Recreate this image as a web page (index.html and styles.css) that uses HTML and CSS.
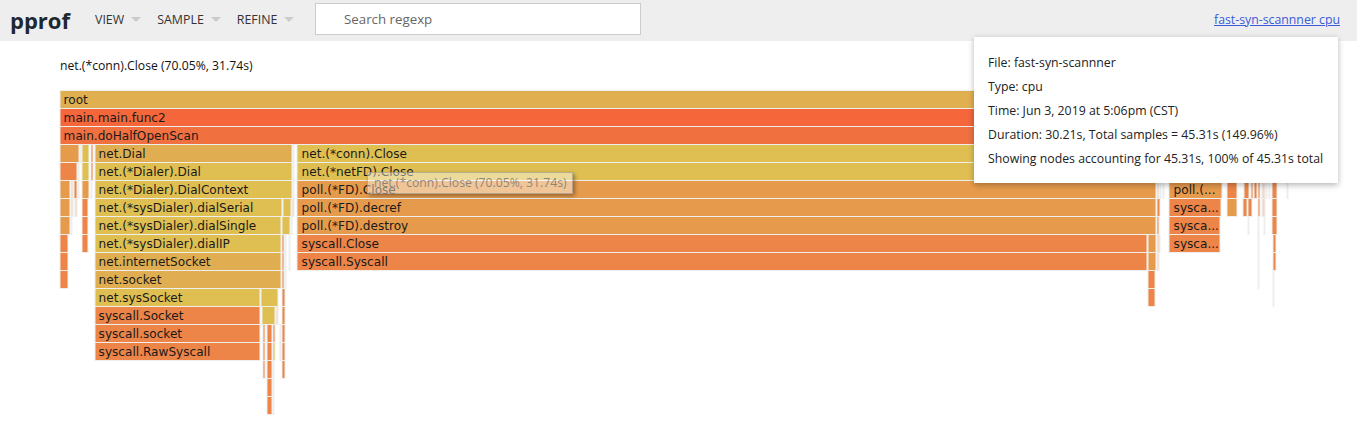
FILE: index.html
```html
<!DOCTYPE html>
<html lang="en">
<head>
<meta charset="utf-8">
<title>pprof</title>
<link rel="stylesheet" href="styles.css">
</head>
<body>
<header class="bar">
  <a class="logo">pprof</a>
  <nav class="menus">
    <span class="menu">VIEW<i class="caret"></i></span>
    <span class="menu">SAMPLE<i class="caret"></i></span>
    <span class="menu">REFINE<i class="caret"></i></span>
  </nav>
  <div class="search"><span class="placeholder">Search regexp</span></div>
  <a class="title-link">fast-syn-scannner cpu</a>
</header>
<aside class="details">
  <div>File: fast-syn-scannner</div>
  <div>Type: cpu</div>
  <div>Time: Jun 3, 2019 at 5:06pm (CST)</div>
  <div>Duration: 30.21s, Total samples = 45.31s (149.96%)</div>
  <div>Showing nodes accounting for 45.31s, 100% of 45.31s total</div>
</aside>
<p class="current">net.(*conn).Close (70.05%, 31.74s)</p>
<main class="graph">
<svg class="flame" width="1357" height="340" viewBox="0 0 1357 340">
<g transform="translate(0 .5)">
<rect class="root" x="60" y="0" width="1230" height="18"/>
<rect class="hot" x="60" y="18" width="1230" height="18"/>
<rect class="warm" x="60" y="36" width="1230" height="18"/>

<rect class="poll" x="60" y="54" width="19" height="18"/>
<rect class="sys" x="80" y="54" width="1" height="18"/>
<rect class="yel" x="82" y="54" width="7" height="18"/>
<rect class="sys" x="91" y="54" width="2" height="18"/>
<rect class="gold" x="95" y="54" width="197" height="18"/>
<rect class="yel" x="293" y="54" width="1" height="18"/>
<rect class="yel" x="297" y="54" width="873" height="18"/>

<rect class="sys" x="60" y="72" width="17" height="18"/>
<rect class="poll" x="78" y="72" width="1" height="18"/>
<rect class="yel" x="82" y="72" width="7" height="18"/>
<rect class="sys" x="91" y="72" width="2" height="18"/>
<rect class="yel" x="95" y="72" width="197" height="18"/>
<rect class="yel" x="293" y="72" width="1" height="18"/>
<rect class="yel" x="297" y="72" width="868" height="18"/>

<rect class="poll" x="60" y="90" width="10" height="18"/>
<rect class="pale" x="71" y="90" width="2" height="18"/>
<rect class="sys" x="74" y="90" width="3" height="18"/>
<rect class="pale" x="78" y="90" width="1" height="18"/>
<rect class="poll" x="82" y="90" width="7" height="18"/>
<rect class="pale" x="91" y="90" width="1" height="18"/>
<rect class="yel" x="95" y="90" width="197" height="18"/>
<rect class="pale" x="293" y="90" width="1" height="18"/>
<rect class="poll" x="297" y="90" width="859" height="18"/>
<rect class="pale" x="1157" y="90" width="2" height="18"/>
<rect class="pale" x="1160" y="90" width="1" height="18"/>
<rect class="sys" x="1163" y="90" width="1" height="18"/>
<rect class="poll" x="1169" y="90" width="53" height="18"/>
<rect class="sys" x="1227" y="90" width="10" height="18"/>
<rect class="sys" x="1244" y="90" width="5" height="18"/>
<rect class="sys" x="1251" y="90" width="2" height="18"/>
<rect class="sys" x="1254" y="90" width="3" height="18"/>
<rect class="sys" x="1258" y="90" width="2" height="18"/>
<rect class="pale" x="1262" y="90" width="3" height="18"/>
<rect class="pale" x="1266" y="90" width="1" height="18"/>
<rect class="pale" x="1269" y="90" width="1" height="18"/>
<rect class="sys" x="1272" y="90" width="5" height="18"/>
<rect class="pale" x="1287" y="90" width="1" height="18"/>

<rect class="poll" x="60" y="108" width="10" height="18"/>
<rect class="pale" x="71" y="108" width="2" height="18"/>
<rect class="pale" x="75" y="108" width="2" height="18"/>
<rect class="sys" x="82" y="108" width="6" height="18"/>
<rect class="yel" x="95" y="108" width="187" height="18"/>
<rect class="yel" x="283" y="108" width="8" height="18"/>
<rect class="pale" x="292" y="108" width="2" height="18"/>
<rect class="poll" x="297" y="108" width="859" height="18"/>
<rect class="sys" x="1157" y="108" width="3" height="18"/>
<rect class="sys" x="1169" y="108" width="52" height="18"/>
<rect class="poll" x="1227" y="108" width="10" height="18"/>
<rect class="sys" x="1243" y="108" width="4" height="18"/>
<rect class="sys" x="1248" y="108" width="4" height="18"/>
<rect class="sys" x="1258" y="108" width="2" height="18"/>
<rect class="pale" x="1262" y="108" width="3" height="18"/>
<rect class="sys" x="1272" y="108" width="5" height="18"/>

<rect class="poll" x="60" y="126" width="10" height="18"/>
<rect class="pale" x="71" y="126" width="1" height="18"/>
<rect class="sys" x="82" y="126" width="6" height="18"/>
<rect class="yel" x="95" y="126" width="186" height="18"/>
<rect class="yel" x="282" y="126" width="8" height="18"/>
<rect class="pale" x="291" y="126" width="1" height="18"/>
<rect class="poll" x="297" y="126" width="859" height="18"/>
<rect class="sys" x="1157" y="126" width="2" height="18"/>
<rect class="sys" x="1169" y="126" width="51" height="18"/>
<rect class="pale" x="1248" y="126" width="1" height="18"/>
<rect class="sys" x="1258" y="126" width="1" height="18"/>
<rect class="pale" x="1264" y="126" width="1" height="18"/>
<rect class="sys" x="1272" y="126" width="5" height="18"/>

<rect class="sys" x="60" y="144" width="8" height="18"/>
<rect class="sys" x="82" y="144" width="6" height="18"/>
<rect class="yel" x="95" y="144" width="186" height="18"/>
<rect class="sys" x="282" y="144" width="2" height="18"/>
<rect class="sys" x="285" y="144" width="1" height="18"/>
<rect class="pale" x="289" y="144" width="1" height="18"/>
<rect class="sys" x="297" y="144" width="850" height="18"/>
<rect class="poll" x="1148" y="144" width="8" height="18"/>
<rect class="pale" x="1157" y="144" width="3" height="18"/>
<rect class="sys" x="1169" y="144" width="51" height="18"/>
<rect class="sys" x="1258" y="144" width="1" height="18"/>
<rect class="sys" x="1273" y="144" width="3" height="18"/>

<rect class="sys" x="60" y="162" width="8" height="18"/>
<rect class="gold" x="95" y="162" width="186" height="18"/>
<rect class="sys" x="282" y="162" width="2" height="18"/>
<rect class="sys" x="285" y="162" width="1" height="18"/>
<rect class="pale" x="289" y="162" width="1" height="18"/>
<rect class="sys" x="297" y="162" width="850" height="18"/>
<rect class="poll" x="1148" y="162" width="8" height="18"/>
<rect class="pale" x="1157" y="162" width="2" height="18"/>
<rect class="sys" x="1258" y="162" width="1" height="18"/>
<rect class="sys" x="1273" y="162" width="3" height="18"/>

<rect class="sys" x="60" y="180" width="8" height="18"/>
<rect class="gold" x="95" y="180" width="186" height="18"/>
<rect class="sys" x="282" y="180" width="2" height="18"/>
<rect class="sys" x="285" y="180" width="1" height="18"/>
<rect class="sys" x="1148" y="180" width="7" height="18"/>
<rect class="sys" x="1258" y="180" width="1" height="18"/>
<rect class="sys" x="1273" y="180" width="1" height="18"/>

<rect class="yel" x="95" y="198" width="165" height="18"/>
<rect class="yel" x="261" y="198" width="17" height="18"/>
<rect class="sys" x="282" y="198" width="3" height="18"/>
<rect class="sys" x="1148" y="198" width="7" height="18"/>
<rect class="sys" x="1273" y="198" width="1" height="18"/>

<rect class="sys" x="95" y="216" width="165" height="18"/>
<rect class="yel" x="262" y="216" width="13" height="18"/>
<rect class="pale" x="276" y="216" width="2" height="18"/>
<rect class="sys" x="282" y="216" width="3" height="18"/>

<rect class="sys" x="95" y="234" width="165" height="18"/>
<rect class="sys" x="263" y="234" width="2" height="18"/>
<rect class="sys" x="267" y="234" width="5" height="18"/>
<rect class="sys" x="273" y="234" width="2" height="18"/>
<rect class="pale" x="280" y="234" width="1" height="18"/>
<rect class="sys" x="282" y="234" width="3" height="18"/>

<rect class="sys" x="95" y="252" width="165" height="18"/>
<rect class="sys" x="263" y="252" width="2" height="18"/>
<rect class="sys" x="267" y="252" width="5" height="18"/>
<rect class="yel" x="273" y="252" width="2" height="18"/>
<rect class="pale" x="280" y="252" width="1" height="18"/>
<rect class="sys" x="282" y="252" width="3" height="18"/>

<rect class="sys" x="263" y="270" width="2" height="18"/>
<rect class="sys" x="267" y="270" width="5" height="18"/>
<rect class="yel" x="273" y="270" width="1" height="18"/>
<rect class="sys" x="282" y="270" width="3" height="18"/>
<rect class="sys" x="267" y="288" width="5" height="18"/>
<rect class="pale" x="273" y="288" width="1" height="18"/>
<rect class="sys" x="267" y="306" width="5" height="18"/>
<rect class="pale" x="273" y="306" width="1" height="18"/>

<g class="labels" transform="translate(.6 0)">
<text x="63" y="13">root</text>
<text x="63" y="31">main.main.func2</text>
<text x="63" y="49">main.doHalfOpenScan</text>
<text x="98" y="67">net.Dial</text>
<text x="98" y="85">net.(*Dialer).Dial</text>
<text x="98" y="103">net.(*Dialer).DialContext</text>
<text x="98" y="121">net.(*sysDialer).dialSerial</text>
<text x="98" y="139">net.(*sysDialer).dialSingle</text>
<text x="98" y="157">net.(*sysDialer).dialIP</text>
<text x="98" y="175">net.internetSocket</text>
<text x="98" y="193">net.socket</text>
<text x="98" y="211">net.sysSocket</text>
<text x="98" y="229">syscall.Socket</text>
<text x="98" y="247">syscall.socket</text>
<text x="98" y="265">syscall.RawSyscall</text>
<text x="301" y="67">net.(*conn).Close</text>
<text x="301" y="85">net.(*netFD).Close</text>
<text x="301" y="103">poll.(*FD).Close</text>
<text x="301" y="121">poll.(*FD).decref</text>
<text x="301" y="139">poll.(*FD).destroy</text>
<text x="301" y="157">syscall.Close</text>
<text x="301" y="175">syscall.Syscall</text>
<text x="1173" y="103">poll.(...</text>
<text x="1173" y="121">sysca...</text>
<text x="1173" y="139">sysca...</text>
<text x="1173" y="157">sysca...</text>
</g>
</g>
</svg>
<div class="hover">net.(*conn).Close (70.05%, 31.74s)</div>
</main>
</body>
</html>
```
FILE: styles.css
```css
html, body {
  margin: 0;
  padding: 0;
}
body {
  position: relative;
  width: 1357px;
  height: 431px;
  overflow: hidden;
  background: #fff;
  font-family: "Open Sans", "Noto Sans", sans-serif;
  font-size: 12.2px;
  color: #222;
}
.bar {
  display: flex;
  align-items: center;
  height: 41px;
  background: #eee;
  padding: 0 17px 0 10px;
  box-sizing: border-box;
}
.logo {
  font-size: 22px;
  font-weight: 700;
  color: #1d2830;
  width: 85px;
  line-height: 41px;
}
.menus {
  display: flex;
  width: 220px;
  margin-top: -3px;
  font-size: 12.4px;
}
.menu {
  display: flex;
  align-items: center;
  color: #333;
  margin-right: 16px;
}
.caret {
  width: 0;
  height: 0;
  margin-left: 7px;
  border-left: 5px solid transparent;
  border-right: 5px solid transparent;
  border-top: 5px solid #ccc;
}
.search {
  width: 326px;
  height: 32px;
  margin-top: -3px;
  box-sizing: border-box;
  background: #fff;
  border: 1px solid #ccc;
  padding-left: 28px;
  line-height: 30px;
  font-size: 13.3px;
}
.placeholder {
  color: #666;
}
.title-link {
  margin-left: auto;
  margin-top: -3px;
  font-size: 12.3px;
  color: #3b5bdb;
  text-decoration: underline;
}
.details {
  position: absolute;
  left: 974px;
  top: 37px;
  width: 364px;
  height: 146px;
  box-sizing: border-box;
  padding: 14px 14px;
  background: #fff;
  box-shadow: 0 2px 6px rgba(0, 0, 0, .3);
  font-size: 12.3px;
  line-height: 24px;
  white-space: nowrap;
  z-index: 3;
}
.current {
  margin: 16px 0 0 60px;
  height: 33px;
  line-height: 17px;
  color: #111;
}
.graph {
  display: block;
}
.flame {
  display: block;
}
.flame rect {
  stroke: #eee;
  stroke-width: 1;
}
.root { fill: #e0b050; }
.hot { fill: #f5663b; }
.warm { fill: #f07040; }
.gold { fill: #e0ae50; }
.yel { fill: #dfbf52; }
.poll { fill: #e69b4c; }
.sys { fill: #ec8547; }
.pale { fill: #f2d9c4; }
.labels text {
  font-family: "DejaVu Sans", Verdana, sans-serif;
  font-size: 12.1px;
  fill: #1a1a1a;
}
.hover {
  position: absolute;
  left: 367px;
  top: 172px;
  width: 206px;
  height: 22px;
  box-sizing: border-box;
  padding-left: 6px;
  line-height: 20px;
  border: 1px solid rgba(120, 120, 120, .45);
  background: rgba(255, 255, 255, .42);
  box-shadow: 2px 2px 4px rgba(0, 0, 0, .35);
  color: rgba(110, 110, 110, .75);
  white-space: nowrap;
}
```
